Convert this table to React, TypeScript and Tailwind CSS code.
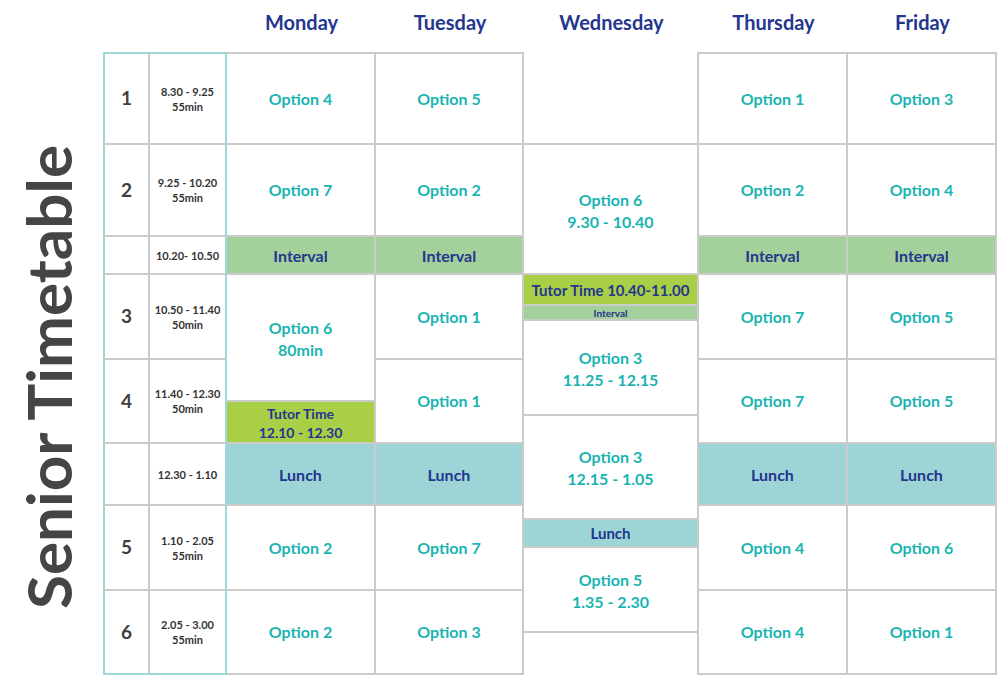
import type { ReactNode } from 'react';

const font = { fontFamily: 'Lato, "Open Sans", sans-serif' };

const days = ['Monday', 'Tuesday', 'Wednesday', 'Thursday', 'Friday'];

type Slot = { num?: string; time: string; mins?: string };

const slots: Slot[] = [
  { num: '1', time: '8.30 - 9.25', mins: '55min' },
  { num: '2', time: '9.25 - 10.20', mins: '55min' },
  { time: '10.20- 10.50' },
  { num: '3', time: '10.50 - 11.40', mins: '50min' },
  { num: '4', time: '11.40 - 12.30', mins: '50min' },
  { time: '12.30 - 1.10' },
  { num: '5', time: '1.10 - 2.05', mins: '55min' },
  { num: '6', time: '2.05 - 3.00', mins: '55min' },
];

// rows for the regular columns (Tue, Thu, Fri); Monday handled on its own
const tuesday = ['Option 5', 'Option 2', 'Interval', 'Option 1', 'Option 1', 'Lunch', 'Option 7', 'Option 3'];
const thursday = ['Option 1', 'Option 2', 'Interval', 'Option 7', 'Option 7', 'Lunch', 'Option 4', 'Option 4'];
const friday = ['Option 3', 'Option 4', 'Interval', 'Option 5', 'Option 5', 'Lunch', 'Option 6', 'Option 1'];

function Cell({ label, top }: { label: string; top?: boolean }) {
  const kind =
    label === 'Interval'
      ? 'bg-[#a4d09c] text-[#24368e] pt-[2px]'
      : label === 'Lunch'
        ? 'bg-[#9dd5d7] text-[#24368e] pt-[2px]'
        : 'bg-white text-[#1ab4b2]';
  return (
    <div
      className={`flex items-center justify-center border-r-2 border-b-2 border-[#cbcbcb] text-[16px] font-bold ${kind} ${top ? 'border-t-2' : ''}`}
    >
      {label}
    </div>
  );
}

function DayColumn({ items }: { items: string[] }) {
  return (
    <>
      {items.map((label, i) => (
        <Cell key={i} label={label} top={i === 0} />
      ))}
    </>
  );
}

function Block({ h, className, children }: { h: string; className?: string; children?: ReactNode }) {
  return (
    <div className={`flex shrink-0 flex-col items-center justify-center border-b-2 border-[#cbcbcb] leading-[22px] font-bold ${h} ${className ?? ''}`}>
      {children}
    </div>
  );
}

export default function App() {
  return (
    <div className="flex h-[679px] w-[1000px] bg-white" style={font}>
      <div className="flex w-[103px] shrink-0 items-center justify-center pt-[75px] pr-[8px]">
        <div className="rotate-180 text-[62px] leading-none font-bold text-[#454545] [writing-mode:vertical-rl]">
          Senior Timetable
        </div>
      </div>

      <div className="flex flex-col">
        <div className="grid h-[52px] grid-cols-[47px_77px_149px_148px_175px_149px_149px] items-center">
          <div className="col-span-2" />
          {days.map((d) => (
            <div key={d} className="-mt-[8px] text-center text-[20px] font-bold text-[#24368e]">
              {d}
            </div>
          ))}
        </div>

        <div className="grid grid-flow-col grid-cols-[47px_77px_149px_148px_175px_149px_149px] grid-rows-[93px_92px_38px_85px_84px_62px_85px_84px]">
          {/* period numbers */}
          {slots.map((s, i) => (
            <div
              key={`n${i}`}
              className={`flex items-center justify-center border-l-2 border-r-2 border-b-2 border-l-[#9fd8d9] border-r-[#cbcbcb] text-[19px] font-bold text-[#404040] ${
                i === 0 ? 'border-t-2 border-t-[#9fd8d9]' : ''
              } ${i === slots.length - 1 ? 'border-b-[#9fd8d9]' : 'border-b-[#cbcbcb]'}`}
            >
              {s.num}
            </div>
          ))}

          {/* times */}
          {slots.map((s, i) => (
            <div
              key={`t${i}`}
              className={`flex flex-col items-center justify-center border-r-2 border-b-2 border-r-[#9fd8d9] text-[11px] leading-[15px] font-bold text-[#333] ${
                i === 0 ? 'border-t-2 border-t-[#9fd8d9]' : ''
              } ${i === slots.length - 1 ? 'border-b-[#9fd8d9]' : 'border-b-[#cbcbcb]'}`}
            >
              <span>{s.time}</span>
              {s.mins && <span>{s.mins}</span>}
            </div>
          ))}

          {/* Monday */}
          <Cell label="Option 4" top />
          <Cell label="Option 7" />
          <Cell label="Interval" />
          <div className="row-span-2 flex flex-col border-r-2 border-b-2 border-[#cbcbcb]">
            <div className="flex flex-1 flex-col items-center justify-center pt-[3px] text-[16px] leading-[22px] font-bold text-[#1ab4b2]">
              <span>Option 6</span>
              <span>80min</span>
            </div>
            <div className="flex h-[42px] flex-col items-center justify-center border-t-2 border-[#cbcbcb] bg-[#a9cf46] pt-[2px] text-[14px] leading-[19px] font-bold text-[#24368e]">
              <span>Tutor Time</span>
              <span>12.10 - 12.30</span>
            </div>
          </div>
          <Cell label="Lunch" />
          <Cell label="Option 2" />
          <Cell label="Option 2" />

          <DayColumn items={tuesday} />

          {/* Wednesday */}
          <div className="row-span-8 flex flex-col border-r-2 border-[#cbcbcb]">
            <Block h="h-[93px]" />
            <Block h="h-[130px]" className="pt-[3px] text-[16px] text-[#1ab4b2]">
              <span>Option 6</span>
              <span>9.30 - 10.40</span>
            </Block>
            <Block h="h-[31px]" className="bg-[#a9cf46] text-[15px] text-[#24368e]">
              Tutor Time 10.40-11.00
            </Block>
            <Block h="h-[15px]" className="bg-[#a4d09c] text-[10px] leading-[12px] text-[#24368e]">
              Interval
            </Block>
            <Block h="h-[95px]" className="pt-[2px] text-[16px] text-[#1ab4b2]">
              <span>Option 3</span>
              <span>11.25 - 12.15</span>
            </Block>
            <Block h="h-[104px]" className="pt-[2px] text-[16px] text-[#1ab4b2]">
              <span>Option 3</span>
              <span>12.15 - 1.05</span>
            </Block>
            <Block h="h-[28px]" className="bg-[#9dd5d7] text-[15px] text-[#24368e]">
              Lunch
            </Block>
            <Block h="h-[85px]" className="pt-[2px] text-[16px] text-[#1ab4b2]">
              <span>Option 5</span>
              <span>1.35 - 2.30</span>
            </Block>
            <div className="flex-1" />
          </div>

          <DayColumn items={thursday} />
          <DayColumn items={friday} />
        </div>
      </div>
    </div>
  );
}
